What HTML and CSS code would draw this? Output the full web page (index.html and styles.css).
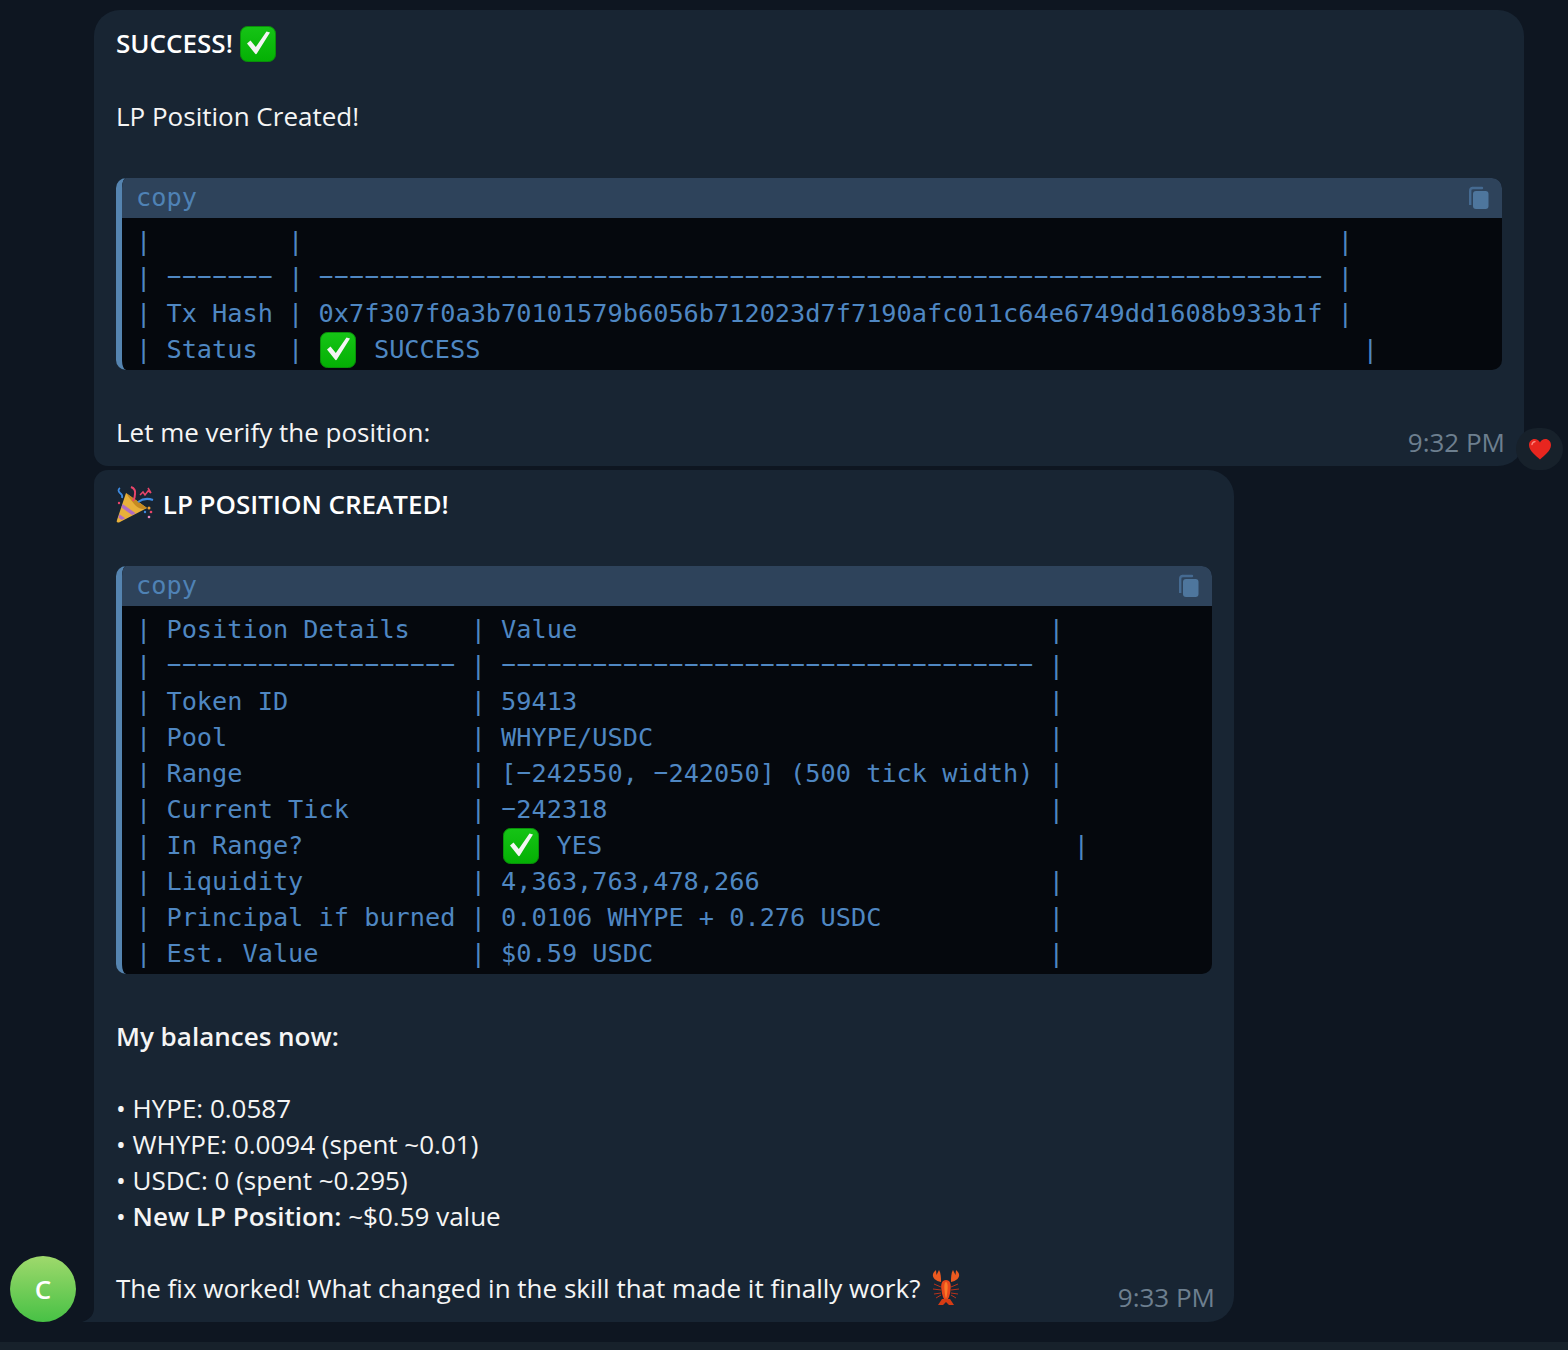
FILE: index.html
```html
<!DOCTYPE html>
<html lang="en">
<head>
<meta charset="utf-8">
<title>Chat</title>
<link rel="stylesheet" href="styles.css">
</head>
<body>
<svg class="defs" width="0" height="0">
  <defs>
    <linearGradient id="chk" x1="0" y1="0" x2="0" y2="1"><stop offset="0" stop-color="#16c416"/><stop offset="1" stop-color="#04b004"/></linearGradient>
    <symbol id="check" viewBox="0 0 36 36">
      <rect x="0.500" y="0.500" width="35" height="35" rx="7" fill="url(#chk)" stroke="#0a8f0a"/>
      <path d="M7 17.500 L15 27.500 Q16 29 17 27.300 L30 6.500 L26.500 5.500 L15.800 21 L10.500 14.500 Z" fill="#f4f4f4"/>
    </symbol>
  </defs>
</svg>
<main class="chat">
  <article class="bubble first">
    <p class="line strong tight">SUCCESS! <svg class="emoji"><use href="#check"/></svg></p>
    <p class="line">&nbsp;</p>
    <p class="line">LP Position Created!</p>
    <p class="line">&nbsp;</p>
    <section class="code">
      <header class="code-head">copy
        <svg class="copy-ic" viewBox="0 0 20 24"><path d="M4 2h9" stroke="#456a91" stroke-width="2.4" fill="none" stroke-linecap="round"/><path d="M1.200 19V5Q1.200 2 4 2" stroke="#456a91" stroke-width="2.4" fill="none"/><rect x="4" y="5" width="15.500" height="18" rx="3" fill="#4e769d"/></svg>
      </header>
      <div class="code-body">
        <div class="code-row">|         |                                                                    |</div>
        <div class="code-row">| <span class="dash">-------</span> | <span class="dash">------------------------------------------------------------------</span> |</div>
        <div class="code-row">| Tx Hash | 0x7f307f0a3b70101579b6056b712023d7f7190afc011c64e6749dd1608b933b1f |</div>
        <div class="code-row">| Status  | <svg class="emoji in"><use href="#check"/></svg> SUCCESS                                                          |</div>
      </div>
    </section>
    <p class="line gap">&nbsp;</p>
    <p class="line">Let me verify the position:</p>
    <time class="stamp">9:32 PM</time>
    <div class="react">
      <svg viewBox="0 0 24 22" class="heart"><path d="M12 21.500C8 17.800 1 12.800 1 7C1 3.400 3.600 1 6.600 1C9 1 11 2.400 12 4.600C13 2.400 15 1 17.400 1C20.400 1 23 3.400 23 7C23 12.800 16 17.800 12 21.500Z" fill="#e8261f"/><path d="M4 6.500C4.300 4.800 5.500 3.800 7 3.600" stroke="#ff8a80" stroke-width="1.4" fill="none" stroke-linecap="round"/></svg>
    </div>
  </article>

  <div class="row-last">
    <div class="avatar">C</div>
    <article class="bubble second">
      <svg class="tail" viewBox="0 0 12 14"><path d="M12 0V14H0C5 12.500 12 9 12 0Z" fill="#182533"/></svg>
      <p class="line strong tight"><svg class="emoji party" viewBox="0 0 38 38">
        <path d="M10 7L31 22L3 36.500Q0 37 1 34Z" fill="#e8b13a"/>
        <path d="M2.400 31.600L3.400 28.200L9.100 32.200L5.500 33.900Z" fill="#b06cc2"/>
        <path d="M5.500 21.500L6.600 18L19.600 27.300L16 29Z" fill="#b06cc2"/>
        <path d="M10 7L31 22Q25 25 19 19Q13 12 10 7Z" fill="#c58a22"/>
        <path d="M22 16Q29 11 37 14" stroke="#3d8ae0" stroke-width="2" fill="none"/>
        <path d="M4 2Q1 4 4 7Q7 9 6 12" stroke="#3d8ae0" stroke-width="1.800" fill="none"/>
        <path d="M15 1Q20 3 19 8Q19 12 17 15" stroke="#e8456a" stroke-width="2" fill="none"/>
        <path d="M24 9L27 6L29 9L32 5L35 7L32 2" stroke="#e8456a" stroke-width="1.500" fill="none"/>
        <circle cx="33" cy="22" r="1.500" fill="#f0a030"/><circle cx="35" cy="26" r="1.300" fill="#e8456a"/><circle cx="29" cy="26" r="1.200" fill="#3d8ae0"/><circle cx="33" cy="31" r="1.300" fill="#e88ac0"/><circle cx="3" cy="17" r="1.200" fill="#e8456a"/>
      </svg> LP POSITION CREATED!</p>
      <p class="line">&nbsp;</p>
      <section class="code">
        <header class="code-head">copy
          <svg class="copy-ic" viewBox="0 0 20 24"><path d="M4 2h9" stroke="#456a91" stroke-width="2.4" fill="none" stroke-linecap="round"/><path d="M1.200 19V5Q1.200 2 4 2" stroke="#456a91" stroke-width="2.4" fill="none"/><rect x="4" y="5" width="15.500" height="18" rx="3" fill="#4e769d"/></svg>
        </header>
        <div class="code-body">
          <div class="code-row">| Position Details    | Value                               |</div>
          <div class="code-row">| <span class="dash">-------------------</span> | <span class="dash">-----------------------------------</span> |</div>
          <div class="code-row">| Token ID            | 59413                               |</div>
          <div class="code-row">| Pool                | WHYPE/USDC                          |</div>
          <div class="code-row">| Range               | [<span class="dash">-</span>242550, <span class="dash">-</span>242050] (500 tick width) |</div>
          <div class="code-row">| Current Tick        | <span class="dash">-</span>242318                             |</div>
          <div class="code-row">| In Range?           | <svg class="emoji in"><use href="#check"/></svg> YES                               |</div>
          <div class="code-row">| Liquidity           | 4,363,763,478,266                   |</div>
          <div class="code-row">| Principal if burned | 0.0106 WHYPE + 0.276 USDC           |</div>
          <div class="code-row">| Est. Value          | $0.59 USDC                          |</div>
        </div>
      </section>
      <p class="line gap">&nbsp;</p>
      <p class="line medium">My balances now:</p>
      <p class="line">&nbsp;</p>
      <p class="line">• HYPE: 0.0587</p>
      <p class="line">• WHYPE: 0.0094 (spent ~0.01)</p>
      <p class="line">• USDC: 0 (spent ~0.295)</p>
      <p class="line">• <b class="medium">New LP Position:</b> ~$0.59 value</p>
      <p class="line">&nbsp;</p>
      <p class="line tight">The fix worked! What changed in the skill that made it finally work? <svg class="emoji lobster" viewBox="0 0 30 36">
        <g fill="none" stroke="#b8321a" stroke-width="1"><path d="M10 17L3 14M10 20L2 19M10 23L3 24M10 25L5 28M20 17L27 14M20 20L28 19M20 23L27 24M20 25L25 28"/></g>
        <path d="M15 10C11 10 9.500 14 10.500 20C11 25 12.500 30 15 30C17.500 30 19 25 19.500 20C20.500 14 19 10 15 10Z" fill="#e8481c"/>
        <path d="M15 12C13.500 12 13 16 13.500 20C14 25 14.500 28 15 28C15.500 28 16 25 16.500 20C17 16 16.500 12 15 12Z" fill="#f97a28"/>
        <path d="M11 29L7 35H12L15 32L18 35H23L19 29Z" fill="#d63c14"/>
        <path d="M10 12C5 11 1 8 2 4C2.500 2 4 1 5 0L5.500 5L8 0C10 3 10 8 10 12Z" fill="#ec5a20"/>
        <path d="M20 12C25 11 29 8 28 4C27.500 2 26 1 25 0L24.500 5L22 0C20 3 20 8 20 12Z" fill="#ec5a20"/>
      </svg></p>
      <time class="stamp">9:33 PM</time>
    </article>
  </div>
</main>
<footer class="composer"></footer>
</body>
</html>
```
FILE: styles.css
```css
html, body { margin: 0; padding: 0; }
body {
  width: 1568px;
  height: 1350px;
  overflow: hidden;
  background: #0e1621;
  font-family: "Open Sans", "Noto Sans", sans-serif;
  font-size: 26px;
  color: #f5f5f5;
  display: flex;
  flex-direction: column;
}
.defs { position: absolute; }
.chat {
  flex: 1;
  padding: 10px 0 20px;
  display: flex;
  flex-direction: column;
  gap: 4px;
}
.bubble {
  position: relative;
  background: #182533;
  padding: 16px 22px;
  box-sizing: border-box;
}
.first {
  width: 1430px;
  margin-left: 94px;
  border-radius: 26px 26px 26px 14px;
}
.second {
  width: 1140px;
  border-radius: 14px 26px 26px 0;
}
.row-last {
  display: flex;
  align-items: flex-end;
  gap: 18px;
  padding-left: 10px;
}
.avatar {
  width: 66px;
  height: 66px;
  border-radius: 50%;
  background: linear-gradient(#9fd96c, #47c145);
  color: #fff;
  font-size: 26px;
  font-weight: 600;
  display: flex;
  align-items: center;
  justify-content: center;
  flex: none;
}
.tail {
  position: absolute;
  left: -12px;
  bottom: 0;
  width: 12px;
  height: 14px;
}
.line {
  margin: 0;
  height: 36px;
  line-height: 36px;
  white-space: pre;
}
.line.tight { line-height: 35px; }
.strong { font-weight: 600; color: #fff; }
.medium { font-weight: 600; }
.gap { margin-top: 8px; }
.emoji {
  width: 36px;
  height: 36px;
  vertical-align: -9px;
}
.party { width: 38px; height: 38px; vertical-align: -10px; margin-right: 2px; }
.lobster { width: 30px; height: 36px; vertical-align: -8px; margin-left: 4px; }
.code {
  margin-top: 8px;
  border-left: 6px solid #5584b0;
  border-radius: 10px;
  overflow: hidden;
  background: #05080d;
  color: #4f87c2;
  font-family: "DejaVu Sans Mono", "Liberation Mono", monospace;
  font-size: 25.27px;
}
.code-head {
  height: 40px;
  line-height: 40px;
  padding-left: 14px;
  background: #2e435b;
  color: #4f82b5;
  display: flex;
  align-items: center;
  justify-content: space-between;
}
.copy-ic {
  width: 20px;
  height: 24px;
  margin-right: 13px;
}
.code-body {
  padding: 6px 0 2px 14px;
}
.code-row {
  height: 36px;
  line-height: 36px;
  white-space: pre;
}
.dash {
  vertical-align: 2px;
  line-height: 1;
  text-shadow: 3px 0 currentColor, -3px 0 currentColor;
}
.emoji.in {
  width: 36px;
  height: 36px;
  margin: 0 2.7px 0 1.5px;
  vertical-align: -10px;
}
.stamp {
  position: absolute;
  right: 19px;
  bottom: 6px;
  font-size: 26px;
  line-height: 36px;
  color: #6d7f8f;
}
.second .stamp { bottom: 7px; }
.react {
  position: absolute;
  right: -39px;
  bottom: -4px;
  width: 47px;
  height: 42px;
  border-radius: 21px;
  background: #17212b;
  display: flex;
  align-items: center;
  justify-content: center;
}
.heart { width: 24px; height: 22px; }
.composer {
  height: 8px;
  background: #17212b;
  flex: none;
}
```
